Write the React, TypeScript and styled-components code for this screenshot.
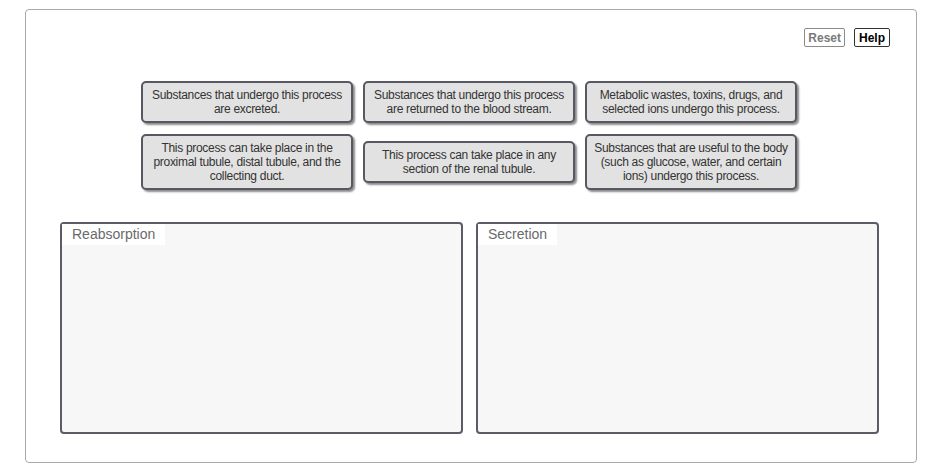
import React from "react";
import styled, { createGlobalStyle } from "styled-components";

const Global = createGlobalStyle`
  html, body { margin: 0; padding: 0; background: #fff; }
  body { font-family: "Liberation Sans", Arial, sans-serif; }
`;

const Page = styled.div`
  padding: 9px 0 0 25px;
`;

const Panel = styled.div`
  box-sizing: border-box;
  width: 892px;
  height: 454px;
  border: 1px solid #a9a9a9;
  border-radius: 4px;
  padding: 18px 26px 0 0;
`;

const Toolbar = styled.div`
  display: flex;
  justify-content: flex-end;
  gap: 9px;
`;

const ToolButton = styled.button<{ $primary?: boolean }>`
  box-sizing: border-box;
  height: 19px;
  padding: 0 ${(p) => (p.$primary ? "4px" : "3px")};
  font-family: "Liberation Sans", Arial, sans-serif;
  font-size: 12px;
  font-weight: bold;
  background: #fff;
  border-radius: 2px;
  border: 1px solid ${(p) => (p.$primary ? "#333" : "#8a8a8a")};
  color: ${(p) => (p.$primary ? "#000" : "#7a7a7a")};
  cursor: pointer;
`;

const CardGrid = styled.div`
  margin: 34px 0 0 22px;
  display: grid;
  grid-template-columns: repeat(3, 212px);
  column-gap: 10px;
  row-gap: 11px;
  justify-content: center;
  align-items: center;
`;

const Card = styled.div`
  box-sizing: border-box;
  width: 212px;
  padding: 5px 3px;
  background: #e2e2e2;
  border: 2px solid #585862;
  border-radius: 5px;
  box-shadow: 2px 2px 2px #8c8c8c;
  font-size: 12px;
  letter-spacing: -0.3px;
  line-height: 14px;
  color: #333;
  text-align: center;
`;

const Zones = styled.div`
  display: flex;
  gap: 13px;
  margin-top: 32px;
  padding-left: 34px;
`;

const Zone = styled.div`
  box-sizing: border-box;
  width: 403px;
  height: 212px;
  background: #f7f7f7;
  border: 2px solid #5c5c66;
  border-radius: 4px;
`;

const ZoneLabel = styled.div`
  display: inline-block;
  background: #fff;
  color: #6a6a6a;
  font-size: 14px;
  line-height: 21px;
  padding: 0 10px;
`;

const cards = [
  "Substances that undergo this process are excreted.",
  "Substances that undergo this process are returned to the blood stream.",
  "Metabolic wastes, toxins, drugs, and selected ions undergo this process.",
  "This process can take place in the proximal tubule, distal tubule, and the collecting duct.",
  "This process can take place in any section of the renal tubule.",
  "Substances that are useful to the body (such as glucose, water, and certain ions) undergo this process.",
];

export default function App() {
  return (
    <Page>
      <Global />
      <Panel>
        <Toolbar>
          <ToolButton>Reset</ToolButton>
          <ToolButton $primary>Help</ToolButton>
        </Toolbar>
        <CardGrid>
          {cards.map((c) => (
            <Card key={c}>{c}</Card>
          ))}
        </CardGrid>
        <Zones>
          <Zone>
            <ZoneLabel>Reabsorption</ZoneLabel>
          </Zone>
          <Zone>
            <ZoneLabel>Secretion</ZoneLabel>
          </Zone>
        </Zones>
      </Panel>
    </Page>
  );
}
